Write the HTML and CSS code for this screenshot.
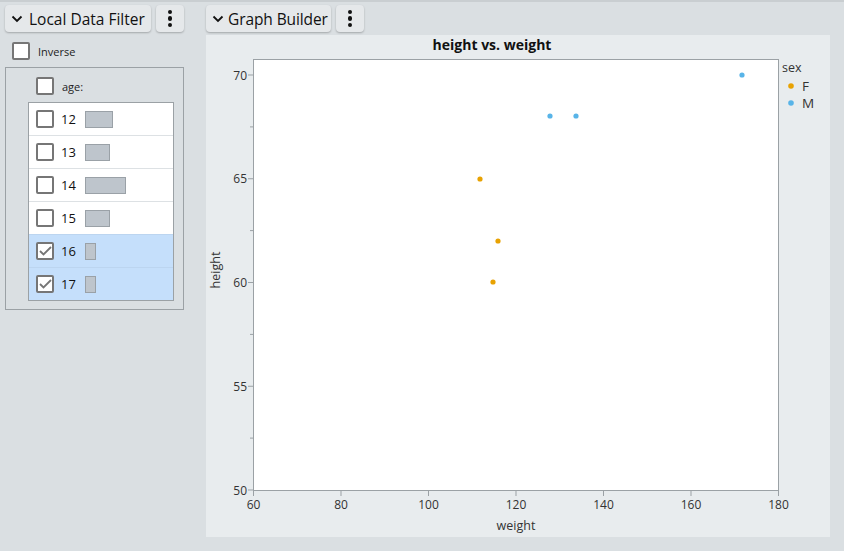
FILE: index.html
```html
<!DOCTYPE html>
<html lang="en">
<head>
  <meta charset="UTF-8" />
  <title>Graph Builder</title>
  <link rel="stylesheet" href="styles.css">
</head>
<body>
  <div class="page">
    <div class="filter">
      <div class="bar">
        <button class="title-btn">
          <svg class="chev" width="12" height="8" viewBox="0 0 12 8"><path d="M1.5 1.5 L6 6 L10.5 1.5" fill="none" stroke="#111" stroke-width="1.8"/></svg>
          Local Data Filter
        </button>
        <button class="menu-btn"><span></span><span></span><span></span></button>
      </div>

      <label class="check-line inverse"><span class="box"></span>Inverse</label>

      <div class="group">
        <label class="check-line age"><span class="box"></span>age:</label>
        <div class="list">
          <div class="row"><span class="box"></span><span class="num">12</span><span class="count" style="width:28px"></span></div>
          <div class="row"><span class="box"></span><span class="num">13</span><span class="count" style="width:25px"></span></div>
          <div class="row"><span class="box"></span><span class="num">14</span><span class="count" style="width:41px"></span></div>
          <div class="row"><span class="box"></span><span class="num">15</span><span class="count" style="width:25px"></span></div>
          <div class="row on"><span class="box"><svg width="13" height="10" viewBox="0 0 13 10"><path d="M1 5 L4.5 8.5 L12 1" fill="none" stroke="#767676" stroke-width="1.8"/></svg></span><span class="num">16</span><span class="count" style="width:11px"></span></div>
          <div class="row on"><span class="box"><svg width="13" height="10" viewBox="0 0 13 10"><path d="M1 5 L4.5 8.5 L12 1" fill="none" stroke="#767676" stroke-width="1.8"/></svg></span><span class="num">17</span><span class="count" style="width:11px"></span></div>
        </div>
      </div>
    </div>

    <div class="graph">
      <div class="bar">
        <button class="title-btn narrow">
          <svg class="chev" width="12" height="8" viewBox="0 0 12 8"><path d="M1.5 1.5 L6 6 L10.5 1.5" fill="none" stroke="#111" stroke-width="1.8"/></svg>
          Graph Builder
        </button>
        <button class="menu-btn"><span></span><span></span><span></span></button>
      </div>

      <div class="plot-panel">
        <svg class="plot" width="624" height="502" viewBox="0 0 624 502">
          <text class="plot-title" x="286" y="15" text-anchor="middle">height vs. weight</text>

          <rect x="47.5" y="24.5" width="525" height="431" fill="#fff" stroke="#9ba1a5"/>

          <g stroke="#9ba1a5">
            <line x1="42" y1="40" x2="47" y2="40"/>
            <line x1="42" y1="143.75" x2="47" y2="143.75"/>
            <line x1="42" y1="247.5" x2="47" y2="247.5"/>
            <line x1="42" y1="351.25" x2="47" y2="351.25"/>
            <line x1="42" y1="455" x2="47" y2="455"/>
            <line x1="44" y1="91.9" x2="47" y2="91.9"/>
            <line x1="44" y1="195.6" x2="47" y2="195.6"/>
            <line x1="44" y1="299.4" x2="47" y2="299.4"/>
            <line x1="44" y1="403.1" x2="47" y2="403.1"/>

            <line x1="47.5" y1="456" x2="47.5" y2="461"/>
            <line x1="135" y1="456" x2="135" y2="461"/>
            <line x1="222.5" y1="456" x2="222.5" y2="461"/>
            <line x1="310" y1="456" x2="310" y2="461"/>
            <line x1="397.5" y1="456" x2="397.5" y2="461"/>
            <line x1="485" y1="456" x2="485" y2="461"/>
            <line x1="572.5" y1="456" x2="572.5" y2="461"/>
          </g>

          <g class="tick" text-anchor="end">
            <text x="41" y="44.5">70</text>
            <text x="41" y="148">65</text>
            <text x="41" y="252">60</text>
            <text x="41" y="355.5">55</text>
            <text x="41" y="459.5">50</text>
          </g>
          <g class="tick" text-anchor="middle">
            <text x="47.5" y="474">60</text>
            <text x="135" y="474">80</text>
            <text x="222.5" y="474">100</text>
            <text x="310" y="474">120</text>
            <text x="397.5" y="474">140</text>
            <text x="485" y="474">160</text>
            <text x="572.5" y="474">180</text>
          </g>

          <text class="axis" x="310" y="495" text-anchor="middle">weight</text>
          <text class="axis" x="14" y="235" text-anchor="middle" transform="rotate(-90 14 235)">height</text>

          <g fill="#e8a202">
            <circle cx="274" cy="144" r="2.6"/>
            <circle cx="292" cy="206" r="2.6"/>
            <circle cx="287" cy="247" r="2.6"/>
          </g>
          <g fill="#58b4e8">
            <circle cx="344" cy="81" r="2.6"/>
            <circle cx="370" cy="81" r="2.6"/>
            <circle cx="536" cy="40" r="2.6"/>
          </g>

          <text class="legend-title" x="576" y="37">sex</text>
          <circle cx="585" cy="51" r="2.8" fill="#e8a202"/>
          <text class="legend" x="596" y="56">F</text>
          <circle cx="585" cy="68" r="2.8" fill="#58b4e8"/>
          <text class="legend" x="596" y="73">M</text>
        </svg>
      </div>
    </div>
  </div>
</body>
</html>
```

FILE: styles.css
```css
body {
  margin: 0;
  background: #dadfe2;
  border-top: 2px solid #c9ced1;
  font-family: "Open Sans", "Noto Sans", sans-serif;
  color: #111;
  height: 549px;
  overflow: hidden;
}

.page {
  display: flex;
  padding: 3px 0 0 5px;
}

.filter {
  width: 179px;
}

.graph {
  margin-left: 22px;
}

.bar {
  display: flex;
  gap: 5px;
  height: 27px;
}

.title-btn,
.menu-btn {
  background: #e5e8ea;
  border: none;
  border-radius: 4px;
  box-shadow: 0 1px 2px rgba(0, 0, 0, 0.25);
  font-family: inherit;
  color: #111;
  padding: 0;
  display: flex;
  align-items: center;
}

.title-btn {
  font-size: 15.5px;
  padding: 0 6px;
  gap: 6px;
}

.title-btn.narrow {
  padding-right: 3px;
  gap: 4px;
  letter-spacing: -0.1px;
}

.menu-btn {
  width: 28px;
  flex-direction: column;
  justify-content: center;
  gap: 2px;
}

.menu-btn span {
  width: 4.5px;
  height: 4.5px;
  border-radius: 50%;
  background: #111;
}

.box {
  box-sizing: border-box;
  width: 18px;
  height: 18px;
  border: 2px solid #767676;
  border-radius: 2px;
  background: #fff;
  display: flex;
  align-items: center;
  justify-content: center;
  flex-shrink: 0;
}

.check-line {
  display: flex;
  align-items: center;
  gap: 8px;
  font-size: 11px;
  color: #222;
}

.inverse {
  margin: 10px 0 0 7px;
}

.group {
  box-sizing: border-box;
  margin-top: 7px;
  border: 1px solid #9ba1a5;
  height: 243px;
  padding: 9px 0 0 22px;
}

.age {
  margin-left: 8px;
}

.list {
  margin-top: 7px;
  width: 146px;
  box-sizing: border-box;
  border: 1px solid #9ba1a5;
  background: #fff;
}

.row {
  display: flex;
  align-items: center;
  height: 32px;
  padding-left: 7px;
  border-top: 1px solid #dde1e4;
  font-size: 13px;
}

.row:first-child {
  border-top: none;
  height: 32px;
}

.row.on {
  background: #c5dffb;
  border-top-color: #bcd5f0;
}

.num {
  width: 24px;
  margin-left: 7px;
}

.count {
  box-sizing: border-box;
  height: 17px;
  background: #bec5cc;
  border: 1px solid #9aa1a7;
}

.plot-panel {
  margin-top: 3px;
  width: 624px;
  height: 502px;
  background: #e8ecee;
}

.plot {
  display: block;
  font-family: "Open Sans", "Noto Sans", sans-serif;
}

.plot-title {
  font-size: 14px;
  font-weight: 700;
  fill: #111;
}

.tick {
  font-size: 12px;
  fill: #333;
}

.axis {
  font-size: 12.5px;
  fill: #333;
}

.legend-title {
  font-size: 12.5px;
  fill: #333;
}

.legend {
  font-size: 13.5px;
  fill: #333;
}
```
